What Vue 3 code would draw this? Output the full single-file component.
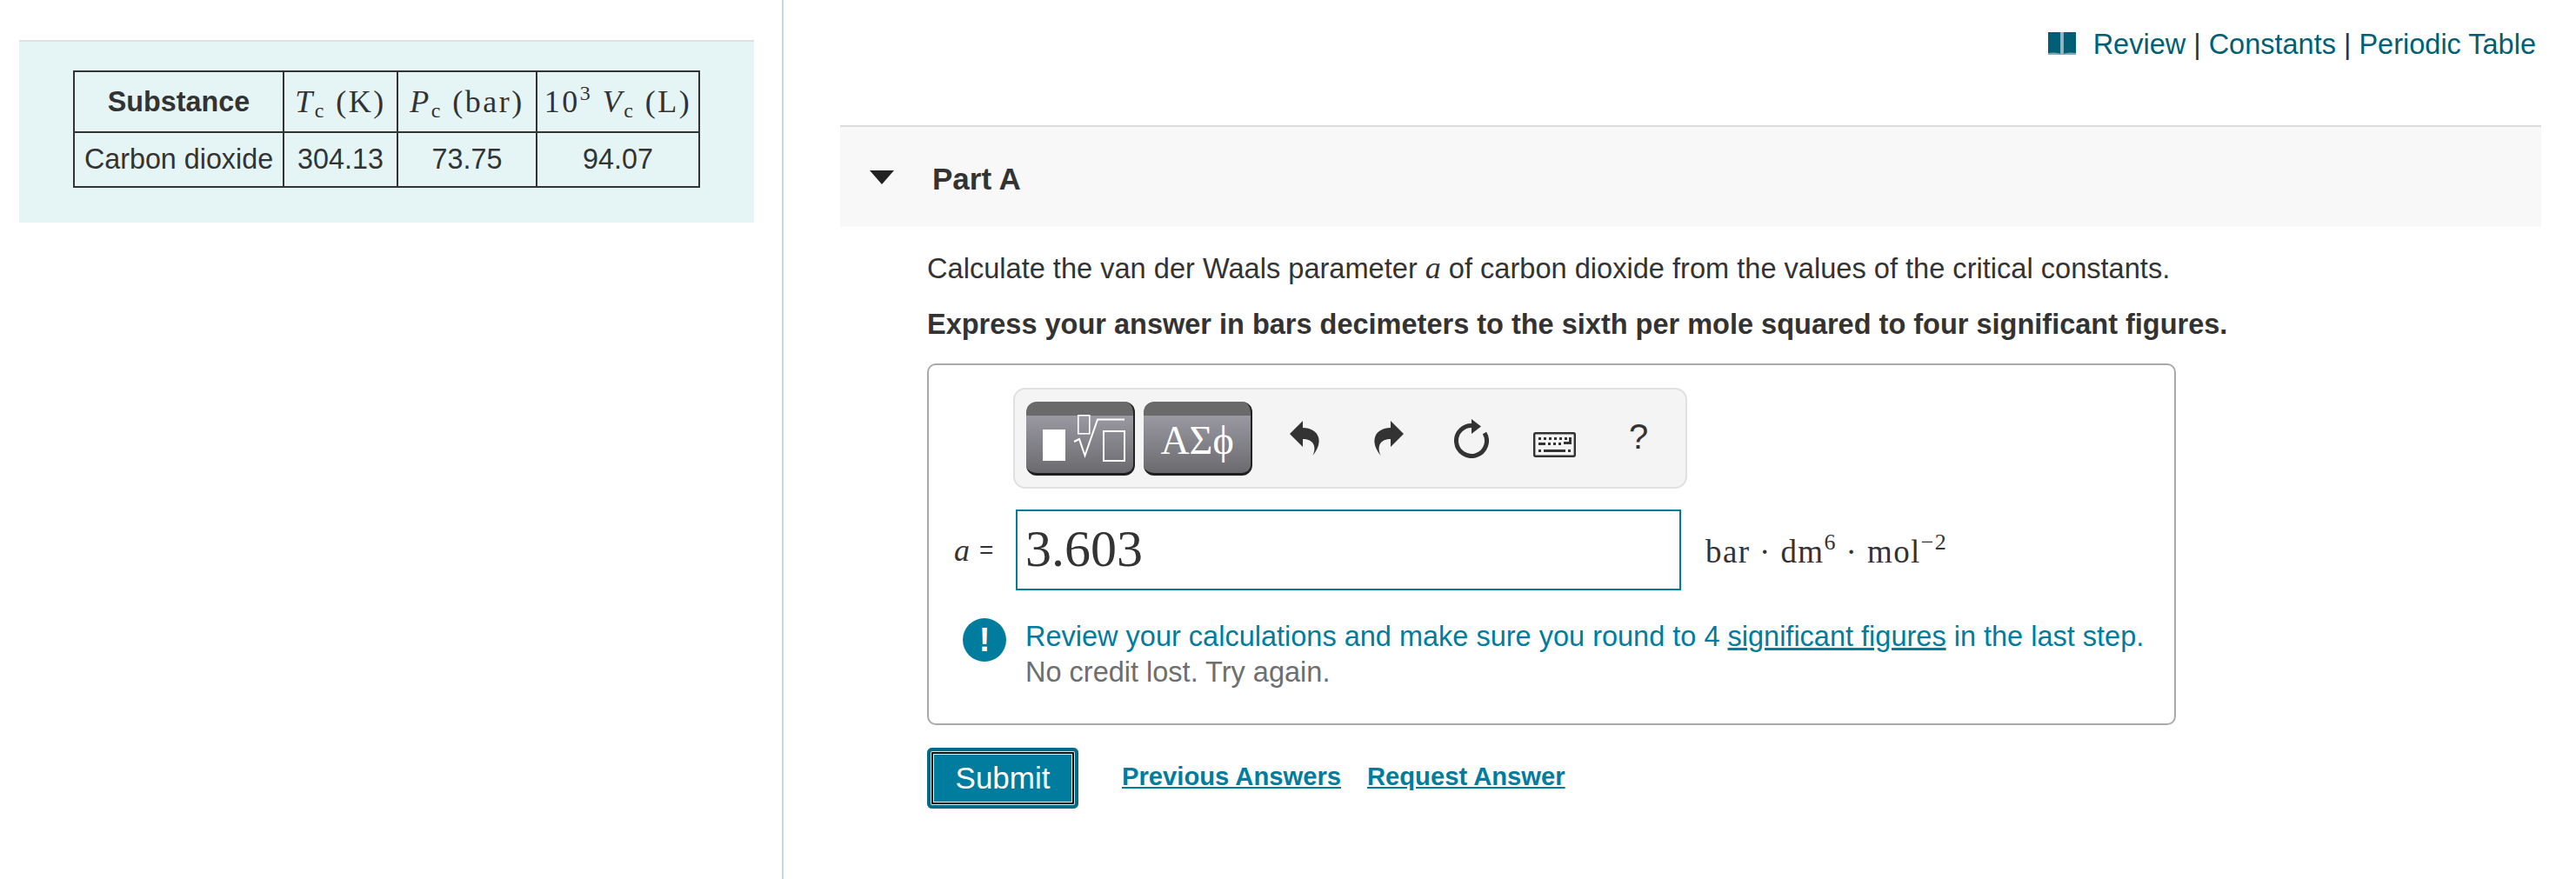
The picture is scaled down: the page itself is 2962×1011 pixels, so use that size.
<template>
  <div class="page">
    <aside class="left">
      <div class="intro">
        <table class="tbl">
          <colgroup>
            <col class="c1" /><col class="c2" /><col class="c3" /><col class="c4" />
          </colgroup>
          <tbody>
            <tr class="r1">
              <th>Substance</th>
              <td class="m"><i>T</i><sub>c</sub> (K)</td>
              <td class="m"><i>P</i><sub>c</sub> (bar)</td>
              <td class="m">10<sup>3</sup> <i>V</i><sub>c</sub> (L)</td>
            </tr>
            <tr class="r2">
              <td>Carbon dioxide</td>
              <td>304.13</td>
              <td>73.75</td>
              <td>94.07</td>
            </tr>
          </tbody>
        </table>
      </div>
    </aside>
    <main class="right">
      <nav class="links">
        <svg class="book" viewBox="0 0 32 26" width="32" height="26">
          <path d="M0 0h14.500v26H0zM17.500 0H32v26H17.500z" fill="#005f75" />
          <path d="M14.500 0h3v26h-3z" fill="#8fb6c1" />
          <path d="M0 24q8-1.500 16 1q8-2.500 16-1v2H0z" fill="#7fabb8" />
        </svg>
        <a>Review</a><span class="sep">|</span><a>Constants</a><span class="sep">|</span><a>Periodic Table</a>
      </nav>
      <section class="part">
        <span class="tri"></span>
        <h2>Part A</h2>
      </section>
      <div class="content">
        <p class="q">Calculate the van der Waals parameter <i class="mi">a</i> of carbon dioxide from the values of the critical constants.</p>
        <p class="inst">Express your answer in bars decimeters to the sixth per mole squared to four significant figures.</p>
        <div class="box">
          <div class="toolbar">
            <button class="tb">
              <svg class="tmpl" viewBox="0 0 125 85" width="125" height="85">
                <rect x="19" y="32" width="26" height="36" fill="#fff" />
                <rect x="59.800" y="15.800" width="13" height="21" fill="none" stroke="#fff" stroke-width="1.600" />
                <path d="M55 46l6-3l6.500 19L82 20.500h31" fill="none" stroke="#fff" stroke-width="2" />
                <rect x="89" y="34" width="24" height="34" fill="none" stroke="#fff" stroke-width="2" />
              </svg>
            </button>
            <button class="tb sym">ΑΣϕ</button>
            <svg class="ic undo" viewBox="0 0 34 40" width="34" height="40"><path d="M15 0L0 15l15 15v-9c7 0 12 3 13 8 1 4 0 7-1.500 11C32 33 35 26 33 19 31 12 24 8 15 8z" fill="#333" /></svg>
            <svg class="ic redo" viewBox="0 0 34 40" width="34" height="40"><path d="M19 0l15 15-15 15v-9c-7 0-12 3-13 8-1 4 0 7 1.500 11C2 33-1 26 1 19 3 12 10 8 19 8z" fill="#333" /></svg>
            <svg class="ic reload" viewBox="0 0 40 45" width="40" height="45">
              <path d="M22 7.600A17.500 17.500 0 1 0 35 16" fill="none" stroke="#333" stroke-width="5" />
              <path d="M20 0l11 8.500-11 8.500z" fill="#333" />
            </svg>
            <svg class="ic kbd" viewBox="0 0 49 29" width="49" height="29">
              <rect x="1.200" y="1.200" width="46.600" height="26.600" rx="1.500" fill="none" stroke="#333" stroke-width="2.400" />
              <path d="M6 6h3v3H6zM12 6h3v3h-3zM18 6h3v3h-3zM24 6h3v3h-3zM30 6h3v3h-3zM36 6h3v3h-3zM41 6h3v8h-9v-3h6zM6 12h8v3H6zM17 12h3v3h-3zM23 12h3v3h-3zM29 12h3v3h-3zM6 20h3v3H6zM12 20h25v3H12zM40 20h3v3h-3z" fill="#333" />
            </svg>
            <span class="help">?</span>
          </div>
          <div class="answer">
            <span class="lab"><i>a</i><span class="eq">=</span></span>
            <div class="input">3.603</div>
            <span class="unit">bar · dm<sup>6</sup> · mol<sup>−2</sup></span>
          </div>
          <div class="fb">
            <span class="bang">!</span>
            <div>
              <div class="fb1">Review your calculations and make sure you round to 4 <a>significant figures</a> in the last step.</div>
              <div class="fb2">No credit lost. Try again.</div>
            </div>
          </div>
        </div>
        <div class="actions">
          <button class="submit">Submit</button>
          <a class="act">Previous Answers</a>
          <a class="act">Request Answer</a>
        </div>
      </div>
    </main>
  </div>
</template>

<script setup>
</script>

<style>
html, body { margin: 0; background: #fff; }
</style>

<style scoped>
.page {
  display: flex;
  width: 2962px;
  height: 1011px;
  overflow: hidden;
  font-family: "Liberation Sans", Arial, sans-serif;
  color: #333;
  background: #fff;
}
.left {
  width: 899px;
  flex: none;
  box-sizing: content-box;
  border-right: 2px solid #c5d5e3;
  padding-top: 46px;
}
.intro {
  margin-left: 22px;
  width: 845px;
  height: 210px;
  box-sizing: border-box;
  background: #e5f5f6;
  border-top: 2px solid #e0e0e0;
  padding: 33px 0 0 62px;
}
.tbl {
  border-collapse: collapse;
  table-layout: fixed;
  width: 719px;
  font-size: 32.300px;
  color: #333;
}
.c1 { width: 241px; }
.c2 { width: 131px; }
.c3 { width: 160px; }
.c4 { width: 187px; }
.tbl th, .tbl td {
  border: 2px solid #333;
  padding: 0;
  text-align: center;
  white-space: nowrap;
}
.r1 { height: 70px; }
.r2 { height: 63px; }
.r2 td { padding-bottom: 1px; }
.m { font-family: "Liberation Serif", serif; font-size: 36px; letter-spacing: 2.500px; }
.m sub { font-size: 24px; line-height: 0; vertical-align: -6px; }
.m sup { font-size: 24px; line-height: 0; vertical-align: 14px; }
.right { flex: 1; min-width: 0; padding-right: 40px; }
.links {
  height: 144px;
  box-sizing: border-box;
  padding-top: 31px;
  display: flex;
  justify-content: flex-end;
  align-items: flex-start;
  font-size: 32.500px;
  line-height: 40px;
  color: #005f75;
  margin-right: 6px;
}
.book { margin: 6px 20px 0 0; }
.sep { color: #333; margin: 0 9px; }
.part {
  margin-left: 65px;
  height: 117px;
  box-sizing: border-box;
  background: #f8f8f8;
  border-top: 2px solid #dcdcdc;
  display: flex;
  align-items: center;
  padding-left: 34px;
}
.tri {
  width: 0;
  height: 0;
  border-left: 14px solid transparent;
  border-right: 14px solid transparent;
  border-top: 16px solid #222;
  margin-right: 44px;
}
.part h2 { margin: 4px 0 0; font-size: 35px; font-weight: 700; color: #333; }
.content { margin-left: 165px; }
.q { margin: 28px 0 0; font-size: 32.600px; line-height: 38px; }
.mi { font-family: "Liberation Serif", serif; font-size: 36px; }
.inst { margin: 26px 0 0; font-size: 32.500px; line-height: 38px; font-weight: 700; }
.box {
  margin-top: 26px;
  width: 1436px;
  height: 416px;
  box-sizing: border-box;
  border: 2px solid #aaa;
  border-radius: 10px;
  padding: 26px 0 0 97px;
}
.toolbar {
  width: 775px;
  height: 116px;
  box-sizing: border-box;
  background: #f4f4f4;
  border: 2px solid #e0e0e0;
  border-radius: 14px;
  display: flex;
  align-items: center;
  padding-left: 13px;
}
.tb {
  width: 125px;
  height: 85px;
  margin-right: 10px;
  box-sizing: border-box;
  padding: 0;
  border: none;
  border-right: 2px solid #222;
  border-bottom: 3px solid #1f1f1f;
  border-radius: 12px;
  background: linear-gradient(#6a6a6a 0 16px, #9a99a3 16px, #6a6a6e 100%);
  color: #fff;
  display: flex;
  align-items: center;
  justify-content: center;
  overflow: hidden;
}
.tmpl { flex: none; align-self: flex-start; margin-left: 2px; }
.sym { font-family: "Liberation Serif", serif; font-size: 46px; padding-top: 8px; }
.ic { flex: none; }
.undo { margin-left: 33px; }
.redo { margin-left: 63px; }
.reload { margin-left: 58px; }
.kbd { margin-left: 51px; margin-top: 14px; }
.help { font-size: 40px; margin-left: 61px; margin-top: -3px; }
.answer {
  display: flex;
  align-items: center;
  margin: 24px 0 0 -67px;
  height: 93px;
}
.lab {
  width: 70px;
  flex: none;
  display: flex;
  align-items: center;
  box-sizing: border-box;
  margin-left: -1px;
  margin-right: 1px;
  font-size: 32px;
  font-family: "Liberation Serif", serif;
}
.lab i { font-size: 36px; }
.eq { font-family: "Liberation Sans", sans-serif; margin-left: 11px; font-size: 28px; }
.input {
  width: 765px;
  height: 93px;
  box-sizing: border-box;
  border: 2px solid #007c9e;
  font-family: "Liberation Serif", serif;
  font-size: 60px;
  line-height: 87px;
  padding-left: 9px;
}
.unit {
  margin-left: 28px;
  padding-top: 3px;
  font-family: "Liberation Serif", serif;
  font-size: 37px;
  letter-spacing: 1.400px;
  white-space: nowrap;
}
.unit sup { font-size: 26px; line-height: 0; vertical-align: 15px; }
.fb {
  display: flex;
  margin: 32px 0 0 -58px;
  font-size: 32.500px;
  line-height: 41px;
  align-items: flex-start;
  white-space: nowrap;
}
.bang {
  width: 50px;
  height: 50px;
  border-radius: 50%;
  flex: none;
  background: #007c9e;
  color: #fff;
  font-weight: 700;
  font-size: 38px;
  line-height: 50px;
  text-align: center;
  margin-right: 22px;
}
.fb1 { color: #007c9e; margin-top: 1px; }
.fb1 a { text-decoration: underline; }
.fb2 { color: #6d6e70; }
.actions {
  margin-top: 26px;
  display: flex;
  align-items: center;
}
.submit {
  width: 174px;
  height: 70px;
  box-sizing: border-box;
  padding: 0;
  background: #007c9e;
  color: #fff;
  font-family: inherit;
  font-size: 35px;
  border: none;
  box-shadow: inset 0 0 0 4px #006b87, inset 0 0 0 5px #d5e8ed, inset 0 0 0 7px #111, inset 0 0 0 8px #e8f2f5;
  border-radius: 6px;
  margin-right: 50px;
}
.act {
  color: #007c9e;
  font-weight: 700;
  font-size: 29.200px;
  text-decoration: underline;
  margin-right: 30px;
  margin-top: -4px;
}
</style>
